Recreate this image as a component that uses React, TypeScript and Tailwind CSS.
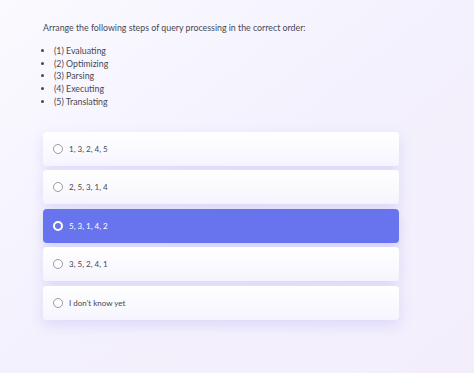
import { useState } from 'react';

const steps = ['(1) Evaluating', '(2) Optimizing', '(3) Parsing', '(4) Executing', '(5) Translating'];
const options = ['1, 3, 2, 4, 5', '2, 5, 3, 1, 4', '5, 3, 1, 4, 2', '3, 5, 2, 4, 1', "I don't know yet"];

export default function App() {
  const [selected, setSelected] = useState(2);

  return (
    <div
      className="w-[474px] h-[373px] overflow-hidden bg-gradient-to-br from-[#fbfaff] via-[#f3f1fd] to-[#f4eefc] text-[#474753]"
      style={{ fontFamily: 'Lato, "Open Sans", sans-serif' }}
    >
      <div className="pl-[43px] pr-[75px] pt-[22px]">
        <p className="text-[8.8px] leading-[12px]">
          Arrange the following steps of query processing in the correct order:
        </p>
        <ul className="mt-[11px] list-disc pl-[11px] text-[8.8px] leading-[12.7px]">
          {steps.map((s) => (
            <li key={s}>{s}</li>
          ))}
        </ul>

        <div className="mt-[23px] flex flex-col gap-[4.5px]">
          {options.map((o, i) => {
            const on = i === selected;
            return (
              <button
                key={o}
                onClick={() => setSelected(i)}
                className={
                  on
                    ? 'h-[34px] w-[356px] rounded-[4px] bg-[#6774ee] flex items-center pl-[10px] gap-[6px] text-left shadow-[0_5px_12px_rgba(110,110,235,0.25)]'
                    : 'h-[34px] w-[356px] rounded-[4px] bg-gradient-to-b from-white to-[#f6f5fe] flex items-center pl-[10px] gap-[6px] text-left shadow-[0_5px_14px_rgba(130,120,240,0.2)]'
                }
              >
                {on ? (
                  <span className="w-[10px] h-[10px] rounded-full border-[2.5px] border-white bg-[#6774ee]" />
                ) : (
                  <span className="w-[10px] h-[10px] rounded-full border border-[#9a9aa6] bg-white" />
                )}
                <span className={on ? 'text-[8px] text-white' : 'text-[8px] text-[#474753]'}>{o}</span>
              </button>
            );
          })}
        </div>
      </div>
    </div>
  );
}
